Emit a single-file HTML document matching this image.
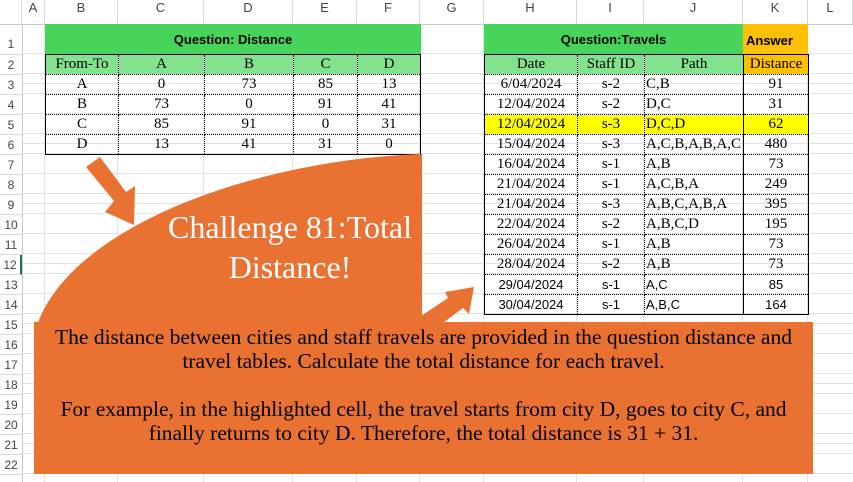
<!DOCTYPE html>
<html><head><meta charset="utf-8"><style>
*{margin:0;padding:0;box-sizing:border-box}
body{width:853px;height:482px;overflow:hidden;background:#fff;position:relative;font-family:"Liberation Serif",serif}
.abs{position:absolute}
.ch{position:absolute;top:0;height:24px;line-height:24px;text-align:center;font:13px "Liberation Sans",sans-serif;color:#444;border-right:1px solid #d8d8d8;background:#fff}
.rh{position:absolute;left:0;width:22px;text-align:center;font:12px "Liberation Sans",sans-serif;color:#444;background:#fff;border-bottom:1px solid #d8d8d8}
table{position:absolute;border-collapse:collapse;table-layout:fixed}
td{height:20px;padding:0;text-align:center;font-family:"Liberation Serif",serif;font-size:15px;line-height:19px;border:1px dotted #000;white-space:nowrap;overflow:hidden}
td.l{text-align:left;padding-left:1px}
.h2 td{background:#83e28e}
.s td{font-family:"Liberation Sans",sans-serif;font-size:13px}
.y td{background:#ffff00}
</style></head><body>
<div class="abs" style="left:0;top:24px;width:853px;height:458px;background:repeating-linear-gradient(to bottom,transparent 0,transparent 29px,#e1e1e1 29px,#e1e1e1 30px,transparent 30px,transparent 30px);"></div>
<div class="abs" style="left:0;top:54px;width:853px;height:428px;background:repeating-linear-gradient(to bottom,transparent 0,transparent 19px,#e1e1e1 19px,#e1e1e1 20px);"></div>
<div class="abs" style="left:44px;top:24px;width:1px;height:458px;background:#e1e1e1"></div>
<div class="abs" style="left:117px;top:24px;width:1px;height:458px;background:#e1e1e1"></div>
<div class="abs" style="left:203px;top:24px;width:1px;height:458px;background:#e1e1e1"></div>
<div class="abs" style="left:292px;top:24px;width:1px;height:458px;background:#e1e1e1"></div>
<div class="abs" style="left:356px;top:24px;width:1px;height:458px;background:#e1e1e1"></div>
<div class="abs" style="left:419px;top:24px;width:1px;height:458px;background:#e1e1e1"></div>
<div class="abs" style="left:483px;top:24px;width:1px;height:458px;background:#e1e1e1"></div>
<div class="abs" style="left:576px;top:24px;width:1px;height:458px;background:#e1e1e1"></div>
<div class="abs" style="left:643px;top:24px;width:1px;height:458px;background:#e1e1e1"></div>
<div class="abs" style="left:742px;top:24px;width:1px;height:458px;background:#e1e1e1"></div>
<div class="abs" style="left:807px;top:24px;width:1px;height:458px;background:#e1e1e1"></div>
<div class="abs" style="left:0;top:0;width:853px;height:25px;background:#fff;border-bottom:1px solid #c8c8c8"></div>
<div class="ch" style="left:0;width:22px;"></div>
<div class="ch" style="left:22px;width:23px">A</div>
<div class="ch" style="left:45px;width:73px">B</div>
<div class="ch" style="left:118px;width:86px">C</div>
<div class="ch" style="left:204px;width:89px">D</div>
<div class="ch" style="left:293px;width:64px">E</div>
<div class="ch" style="left:357px;width:63px">F</div>
<div class="ch" style="left:420px;width:64px">G</div>
<div class="ch" style="left:484px;width:93px">H</div>
<div class="ch" style="left:577px;width:67px">I</div>
<div class="ch" style="left:644px;width:99px">J</div>
<div class="ch" style="left:743px;width:65px">K</div>
<div class="ch" style="left:808px;width:45px">L</div>
<div class="abs" style="left:22px;top:24px;width:1px;height:458px;background:#c8c8c8"></div>
<div class="rh" style="top:25px;height:30px;line-height:38px">1</div>
<div class="rh" style="top:55px;height:20px;line-height:20px">2</div>
<div class="rh" style="top:75px;height:20px;line-height:20px">3</div>
<div class="rh" style="top:95px;height:20px;line-height:20px">4</div>
<div class="rh" style="top:115px;height:20px;line-height:20px">5</div>
<div class="rh" style="top:135px;height:20px;line-height:20px">6</div>
<div class="rh" style="top:155px;height:20px;line-height:20px">7</div>
<div class="rh" style="top:175px;height:20px;line-height:20px">8</div>
<div class="rh" style="top:195px;height:20px;line-height:20px">9</div>
<div class="rh" style="top:215px;height:20px;line-height:20px">10</div>
<div class="rh" style="top:235px;height:20px;line-height:20px">11</div>
<div class="rh" style="top:255px;height:20px;line-height:20px;border-right:2px solid #217346">12</div>
<div class="rh" style="top:275px;height:20px;line-height:20px">13</div>
<div class="rh" style="top:295px;height:20px;line-height:20px">14</div>
<div class="rh" style="top:315px;height:20px;line-height:20px">15</div>
<div class="rh" style="top:335px;height:20px;line-height:20px">16</div>
<div class="rh" style="top:355px;height:20px;line-height:20px">17</div>
<div class="rh" style="top:375px;height:20px;line-height:20px">18</div>
<div class="rh" style="top:395px;height:20px;line-height:20px">19</div>
<div class="rh" style="top:415px;height:20px;line-height:20px">20</div>
<div class="rh" style="top:435px;height:20px;line-height:20px">21</div>
<div class="rh" style="top:455px;height:20px;line-height:20px">22</div>

<div class="abs" style="left:45px;top:24px;width:376px;height:31px;background:#47d45a;font:bold 13px 'Liberation Sans',sans-serif;text-align:center;line-height:32px">Question: Distance</div>
<table style="left:45px;top:54px;width:376px;border:1.5px solid #000">
<colgroup><col style="width:73px"><col style="width:86px"><col style="width:89px"><col style="width:64px"><col style="width:63px"></colgroup>
<tr class="h2"><td>From-To</td><td>A</td><td>B</td><td>C</td><td>D</td></tr>
<tr><td>A</td><td>0</td><td>73</td><td>85</td><td>13</td></tr>
<tr><td>B</td><td>73</td><td>0</td><td>91</td><td>41</td></tr>
<tr><td>C</td><td>85</td><td>91</td><td>0</td><td>31</td></tr>
<tr><td>D</td><td>13</td><td>41</td><td>31</td><td>0</td></tr>
</table>

<div class="abs" style="left:484px;top:24px;width:259px;height:31px;background:#47d45a;font:bold 13px 'Liberation Sans',sans-serif;text-align:center;line-height:32px">Question:Travels</div>
<div class="abs" style="left:743px;top:24px;width:65px;height:31px;background:#ffc000;font:bold 13px 'Liberation Sans',sans-serif;line-height:34px;padding-left:3px">Answer</div>
<table style="left:484px;top:54px;width:325px;border:1.5px solid #000">
<colgroup><col style="width:93px"><col style="width:67px"><col style="width:99px"><col style="width:65px"></colgroup>
<tr class="h2"><td>Date</td><td>Staff ID</td><td>Path</td><td style="background:#ffc000;border-left:1.5px solid #000">Distance</td></tr>
<tr><td>6/04/2024</td><td>s-2</td><td class="l">C,B</td><td style="border-left:1.5px solid #000">91</td></tr>
<tr><td>12/04/2024</td><td>s-2</td><td class="l">D,C</td><td style="border-left:1.5px solid #000">31</td></tr>
<tr class="y"><td>12/04/2024</td><td>s-3</td><td class="l">D,C,D</td><td style="border-left:1.5px solid #000">62</td></tr>
<tr><td>15/04/2024</td><td>s-3</td><td class="l">A,C,B,A,B,A,C</td><td style="border-left:1.5px solid #000">480</td></tr>
<tr><td>16/04/2024</td><td>s-1</td><td class="l">A,B</td><td style="border-left:1.5px solid #000">73</td></tr>
<tr><td>21/04/2024</td><td>s-1</td><td class="l">A,C,B,A</td><td style="border-left:1.5px solid #000">249</td></tr>
<tr><td>21/04/2024</td><td>s-3</td><td class="l">A,B,C,A,B,A</td><td style="border-left:1.5px solid #000">395</td></tr>
<tr><td>22/04/2024</td><td>s-2</td><td class="l">A,B,C,D</td><td style="border-left:1.5px solid #000">195</td></tr>
<tr><td>26/04/2024</td><td>s-1</td><td class="l">A,B</td><td style="border-left:1.5px solid #000">73</td></tr>
<tr><td>28/04/2024</td><td>s-2</td><td class="l">A,B</td><td style="border-left:1.5px solid #000">73</td></tr>
<tr class="s"><td>29/04/2024</td><td>s-1</td><td class="l">A,C</td><td style="border-left:1.5px solid #000">85</td></tr>
<tr class="s"><td>30/04/2024</td><td>s-1</td><td class="l">A,B,C</td><td style="border-left:1.5px solid #000">164</td></tr>
</table>

<svg class="abs" style="left:0;top:0" width="853" height="482">
<g fill="#e97132">
<path d="M422,154 C250,160 60,230 34,335 L422,335 Z"/>
<polygon points="86,167 100,157 126,192 135,186 134,225 105,212 114,201"/>
<polygon points="415,320 448,298 445,292 474,287 469,314 463,308 428,334"/>
<rect x="34" y="322" width="779" height="152"/>
</g>
</svg>
<div class="abs" style="left:140px;top:207px;width:300px;text-align:center;color:#fff;font-family:'Liberation Serif',serif;font-size:32px;line-height:40px">Challenge 81:Total<br>Distance!</div>
<div class="abs" style="left:20px;top:325px;width:807px;text-align:center;color:#000;font-family:'Liberation Serif',serif;font-size:21.5px;line-height:24px">The distance between cities and staff travels are provided in the question distance and<br>travel tables. Calculate the total distance for each travel.<br><br>For example, in the highlighted cell, the travel starts from city D, goes to city C, and<br>finally returns to city D. Therefore, the total distance is 31 + 31.</div>
</body></html>
